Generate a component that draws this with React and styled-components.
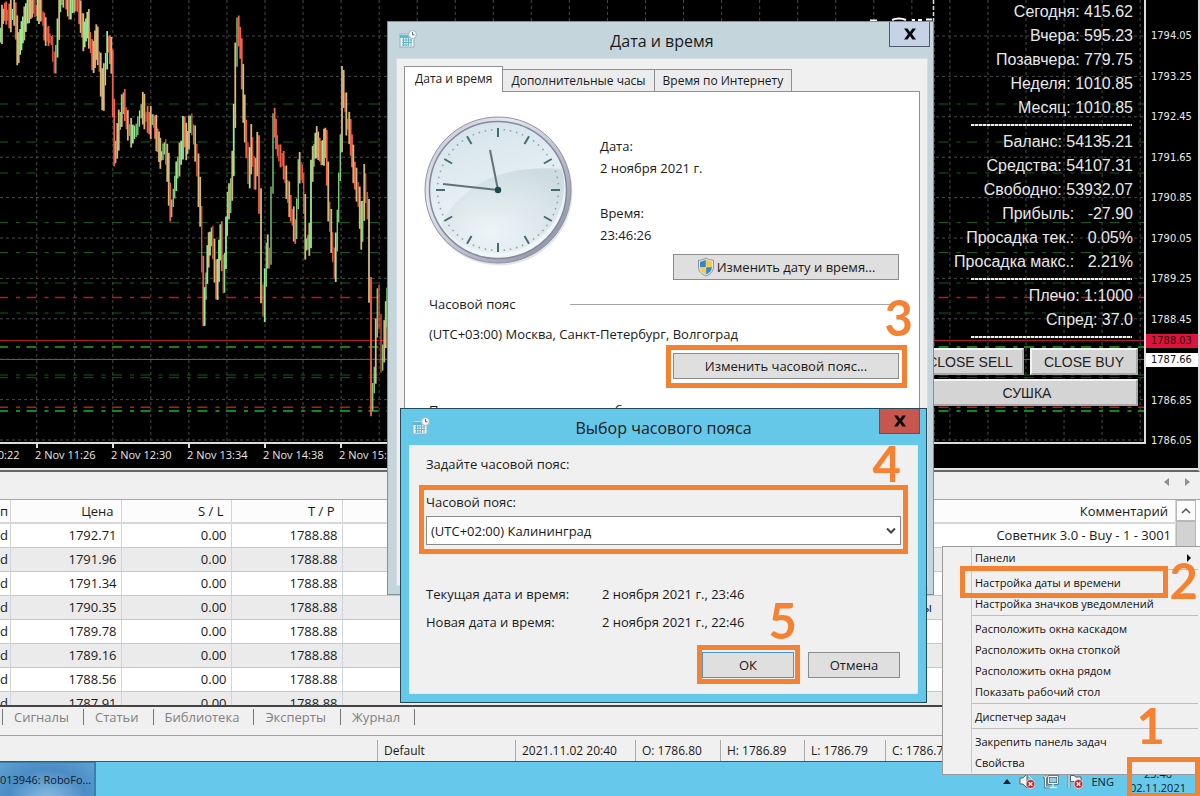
import React from "react";
import styled, { createGlobalStyle, css } from "styled-components";

const ui = '"Open Sans", "Noto Sans", sans-serif';
const arial = '"Liberation Sans", Arial, sans-serif';
const orange = "#f58233";

const GlobalStyle = createGlobalStyle`
  * {
    box-sizing: border-box;
  }
  body {
    margin: 0;
    background: #66c8ea;
    color: #1a1a1a;
    font-family: ${ui};
    font-size: 13px;
  }
  button,
  select {
    font: inherit;
    color: inherit;
  }
`;

const Desktop = styled.div`
  position: relative;
  display: flex;
  flex-direction: column;
  height: 100vh;
  min-height: 780px;
  overflow: hidden;
`;

/* ---------- chart ---------- */

const ChartSection = styled.section`
  position: relative;
  display: flex;
  flex: 0 0 472px;
  background: #000;
  color: #e8e8e8;
  border-bottom: 2px solid #666;
  border-right: 2px solid #ddd;
  box-shadow: inset 0 -2px 0 #e4e4e4;
`;

const Plot = styled.div`
  position: relative;
  display: flex;
  flex-direction: column;
  flex: 1;
  min-width: 0;
`;

const PlotArea = styled.div`
  position: relative;
  flex: 0 0 444px;
  border-right: 2px solid #ddd;
  border-bottom: 2px solid #ddd;
`;

const ChartSvg = styled.svg`
  position: absolute;
  inset: 0;
  width: 100%;
  height: 100%;
`;

const TimeAxis = styled.div`
  display: flex;
  margin-left: -41px;
  overflow: hidden;
  font-size: 11px;
  line-height: 22px;
  white-space: nowrap;
`;

const TimeLabel = styled.span`
  flex: 0 0 76px;
  background: linear-gradient(#ddd, #ddd) 1px 0 / 2px 4px no-repeat;
`;

const PriceAxis = styled.div`
  position: relative;
  display: flex;
  flex-direction: column;
  justify-content: space-between;
  flex: 0 0 52px;
  padding: 29px 0 22px;
  font-family: "DejaVu Sans Condensed", "DejaVu Sans", sans-serif;
  font-size: 11px;
  line-height: 14px;
`;

const Price = styled.span`
  padding-left: 5px;
  ${({ current }) =>
    current &&
    css`
      background: #fff;
      color: #111;
    `}
  ${({ ask }) =>
    ask &&
    css`
      position: absolute;
      top: 334px;
      left: 0;
      right: 0;
      background: #dc143c;
      color: #2a0008;
    `}
`;

const Account = styled.div`
  position: relative;
  width: 222px;
  margin-left: auto;
  margin-right: 6px;
  font-family: ${arial};
  font-size: 16px;
  line-height: 24px;
  text-align: right;
  white-space: pre;
`;

const Stat = styled.div`
  padding-right: 5px;
`;

const Rule = styled.div`
  height: 10px;
  width: 161px;
  margin-left: 55px;
  background: repeating-linear-gradient(
      90deg,
      #eee 0 3px,
      #666 3px 4px
    )
    0 50% / 100% 2px no-repeat;
`;

const TradeButtons = styled.div`
  display: grid;
  grid-template-columns: 1fr 1fr;
  gap: 4px 6px;
  padding-top: 6px;
`;

const TradeButton = styled.button`
  grid-column: ${({ wide }) => (wide ? "1 / -1" : "auto")};
  height: 27px;
  padding: 0;
  border: 2px solid;
  border-color: #f4f4f4 #a8a8a8 #a8a8a8 #f4f4f4;
  background: #d4d4d4;
  color: #222;
  font-size: 14px;
`;

/* ---------- terminal ---------- */

const ScrollStrip = styled.div`
  display: flex;
  justify-content: flex-end;
  align-items: center;
  gap: 16px;
  flex: 0 0 28px;
  padding: 0 10px 8px;
  background: #f0f0f0;
  border-bottom: 1px solid #a6a6a6;
`;

const TradeList = styled.div`
  display: flex;
  flex: 1 1 0;
  min-height: 0;
  overflow: hidden;
  background: #fff;
`;

const Table = styled.table`
  flex: 1;
  width: 0;
  table-layout: fixed;
  border-collapse: collapse;
  align-self: flex-start;
`;

const Col = styled.col`
  width: ${({ size }) => size}px;
`;

const Th = styled.th`
  height: 23px;
  padding: 0 7px 0 0;
  border-right: 1px solid #d4d4d4;
  border-bottom: 2px solid #d8d8d8;
  background: #fcfcfc;
  font-weight: 400;
  text-align: right;
  white-space: nowrap;
`;

const Tr = styled.tr`
  background: ${({ odd }) => (odd ? "#ebebeb" : "#fff")};
`;

const Td = styled.td`
  height: 24px;
  padding: 0 4px 1px 0;
  border-right: ${({ open }) => (open ? 0 : "1px solid #ccd6dc")};
  border-bottom: 1px solid #c8c8c8;
  text-align: right;
  white-space: nowrap;
`;

const ScrollBar = styled.div`
  display: flex;
  flex-direction: column;
  flex: 0 0 20px;
  margin-right: 4px;
  background: #f0f0f0;
`;

const ScrollUp = styled.button`
  display: grid;
  place-items: center;
  height: 21px;
  padding: 0;
  border: 1px solid #b8b8b8;
  background: #fbfbfb;
`;

const ScrollThumb = styled.div`
  height: 120px;
  background: #d2d2d2;
  border: 1px solid #b8b8b8;
`;

const TabStrip = styled.nav`
  display: flex;
  align-items: flex-start;
  flex: 0 0 30px;
  padding-top: 2px;
  padding-left: 2px;
  background: #f0f0f0;
  border-top: 2px solid #444;
  line-height: 16px;
`;

const TabLink = styled.a`
  padding: 0 14px 0 11px;
  border-left: 1px solid #777;
  color: #808080;
  text-decoration: none;

  &:last-child {
    border-right: 1px solid #777;
  }
`;

const StatusBar = styled.footer`
  display: flex;
  flex: 0 0 27px;
  padding: 4px 0 0 377px;
  background: #f0f0f0;
  border-top: 1px solid #a0a0a0;
  border-bottom: 1px solid #39586a;
  font-size: 12px;
  line-height: 21px;
`;

const StatusCell = styled.span`
  flex: 0 0 ${({ size }) => size}px;
  padding-left: 6px;
  border-left: 1px solid #aaa;
  white-space: nowrap;
`;

/* ---------- taskbar ---------- */

const TaskBar = styled.div`
  display: flex;
  justify-content: space-between;
  flex: 0 0 34px;
  background: #66c8ea;
`;

const TaskButton = styled.button`
  padding: 0 3px 0 0;
  border: 0;
  border-right: 2px solid #3d7fab;
  border-top: 1px solid #3d7fab;
  background: radial-gradient(
    ellipse at 50% 120%,
    #8fc0e8 0,
    #4b8cc4 60%,
    #5fa2d2 100%
  );
  color: #0b1c33;
  font-size: 11px;
  white-space: nowrap;
`;

const Tray = styled.div`
  display: flex;
  align-items: center;
  gap: 8px;
  padding-right: 14px;
  padding-top: 4px;
  color: #10222c;
  font-size: 11px;
`;

const TrayClock = styled.time`
  padding-left: 8px;
  line-height: 14px;
  text-align: center;
  white-space: pre-line;
`;

const Menu = styled.ul`
  position: absolute;
  right: 0;
  bottom: 21px;
  z-index: 5;
  width: 258px;
  margin: 0;
  padding: 0 2px 1px 28px;
  list-style: none;
  background: #f0f0f0;
  border: 1px solid #9a9a9a;
  border-right: 0;
  font-size: 11px;
  color: #111;
`;

const MenuItem = styled.li`
  position: relative;
  border-left: 1px solid #c8c8c8;
  ${({ last }) =>
    last &&
    css`
      padding-bottom: 4px;
      &::after {
        content: "";
        position: absolute;
        left: 0;
        right: 0;
        bottom: 2px;
        border-top: 1px solid #bdbdbd;
      }
    `}
`;

const MenuButton = styled.button`
  display: flex;
  justify-content: space-between;
  align-items: center;
  width: 100%;
  height: 21px;
  padding: 0 7px 0 3px;
  border: 0;
  background: none;
  text-align: left;
`;

/* ---------- numbered marks ---------- */

const Marked = styled.div`
  position: relative;
`;

const Frame = styled.div`
  position: absolute;
  inset: ${({ inset }) => inset};
  z-index: 2;
  border: 5px solid ${orange};
  pointer-events: none;
`;

const Step = styled.b`
  position: absolute;
  top: ${({ top }) => top}px;
  right: ${({ right }) => right}px;
  z-index: 6;
  color: ${orange};
  font: 700 49px/36px Lato, sans-serif;
  pointer-events: none;
`;

const ClockMark = styled.div`
  position: absolute;
  right: 0;
  bottom: 0;
  z-index: 6;
  width: 73px;
  height: 39px;
  border: 5px solid ${orange};
  border-bottom-width: 3px;
  pointer-events: none;
`;

/* ---------- dialogs ---------- */

const Dialog = styled.section`
  position: absolute;
  top: ${({ active }) => (active ? 408 : 21)}px;
  left: ${({ active }) => (active ? 400 : 387)}px;
  z-index: ${({ active }) => (active ? 4 : 3)};
  display: flex;
  flex-direction: column;
  width: ${({ active }) => (active ? 527 : 547)}px;
  min-height: ${({ active }) => (active ? 295 : 574)}px;
  padding: 0 ${({ active }) => (active ? 8 : 5)}px 8px 8px;
  border: 1px solid ${({ active }) => (active ? "#1f4a5c" : "#7f9299")};
  background: ${({ active }) => (active ? "#66c8e9" : "#c4d6dc")};
`;

const TitleBar = styled.header`
  display: grid;
  grid-template-columns: 1fr auto 1fr;
  height: 36px;
`;

const Title = styled.h2`
  margin: 0;
  font-size: 16px;
  font-weight: 400;
  line-height: 38px;
`;

const TitleIcon = styled.svg`
  margin: 8px 0 0 3px;
`;

const Close = styled.button`
  justify-self: end;
  display: grid;
  place-items: center;
  width: 41px;
  height: 25px;
  margin-right: -2px;
  padding: 0;
  border: 1px solid #4d5a68;
  border-top: 0;
  background: ${({ danger }) => (danger ? "#c7564f" : "#c6d3e6")};
`;

const DialogBody = styled.div`
  flex: 1;
  padding: ${({ tabs }) => (tabs ? "7px 7px 8px" : "9px 16px 0")};
  background: #f0f0f0;
  border: 1px solid ${({ tabs }) => (tabs ? "#d3dfe4" : "#d9edf4")};
`;

const Tabs = styled.div`
  display: flex;
  align-items: flex-end;
  height: 25px;
`;

const Tab = styled.button`
  position: relative;
  height: ${({ selected }) => (selected ? 26 : 22)}px;
  margin-bottom: ${({ selected }) => (selected ? -1 : 0)}px;
  padding: ${({ selected }) => (selected ? "0 10px 2px" : "0 8px")};
  border: 1px solid #8f8f98;
  border-bottom: 0;
  border-left-width: ${({ joined }) => (joined ? 0 : 1)}px;
  background: ${({ selected }) => (selected ? "#fff" : "#ececec")};
  font-size: 12px;
  white-space: nowrap;
  z-index: ${({ selected }) => (selected ? 1 : 0)};
`;

const TabPanel = styled.div`
  height: 470px;
  padding: 23px 20px 0 19px;
  background: #fff;
  border: 1px solid #8f8f98;
`;

const DateRow = styled.div`
  display: flex;
  gap: 26px;
`;

const DateInfo = styled.dl`
  margin: 20px 0 0;
  line-height: 22px;

  dd {
    margin: 0 0 23px;
  }
`;

const PushButton = styled.button`
  display: flex;
  justify-content: center;
  align-items: center;
  gap: 2px;
  width: ${({ small }) => (small ? "92px" : "226px")};
  height: 26px;
  padding: 0;
  border: 1px solid ${({ primary }) => (primary ? "#4d94c8" : "#8c8c8c")};
  background: #dfdfdf;
`;

const PanelButton = styled(Marked)`
  width: 226px;
  margin-left: auto;
`;

const DateAction = styled(PanelButton)`
  margin-top: -15px;
`;

const GroupTitle = styled.h3`
  display: flex;
  align-items: center;
  gap: 54px;
  margin: 13px 9px 8px 5px;
  font-size: 13px;
  font-weight: 400;
  line-height: 22px;

  &::after {
    content: "";
    flex: 1;
    border-top: 1px solid #a5a5a5;
  }
`;

const Text = styled.p`
  margin: 0 0 8px 5px;
  line-height: 22px;
`;

const DstText = styled(Text)`
  margin-top: 20px;
`;

const DialogText = styled.p`
  margin: 0 0 18px;
  line-height: 18px;
`;

const Field = styled(Marked)`
  display: flex;
  flex-direction: column;
  gap: 3px;

  label {
    line-height: 22px;
  }
`;

const SelectWrap = styled.div`
  position: relative;

  svg {
    position: absolute;
    right: 5px;
    top: 11px;
    pointer-events: none;
  }
`;

const Select = styled.select`
  width: 100%;
  height: 29px;
  padding: 0 4px;
  border: 1px solid #8a8a8a;
  border-radius: 0;
  background: #fff;
  appearance: none;
`;

const Times = styled.dl`
  display: grid;
  grid-template-columns: 176px 1fr;
  row-gap: 6px;
  margin: 38px 0 19px;
  line-height: 22px;

  dd {
    margin: 0;
  }
`;

const Actions = styled.div`
  display: flex;
  justify-content: flex-end;
  gap: 14px;
  padding-right: 1px;
`;

const times = ["10:22", "11:26", "12:30", "13:34", "14:38", "15:42"];

const prices = [
  "1794.05",
  "1793.25",
  "1792.45",
  "1791.65",
  "1790.85",
  "1790.05",
  "1789.25",
  "1788.45",
  "1787.66",
  "1786.85",
  "1786.05",
];

const stats = [
  "Сегодня: 415.62",
  "Вчера: 595.23",
  "Позавчера: 779.75",
  "Неделя: 1010.85",
  "Месяц: 1010.85",
  null,
  "Баланс: 54135.21",
  "Средства: 54107.31",
  "Свободно: 53932.07",
  "Прибыль:   -27.90",
  "Просадка тек.:   0.05%",
  "Просадка макс.:   2.21%",
  null,
  "Плечо: 1:1000",
  "Спред: 37.0",
  null,
];

const orders = [
  "1792.71",
  "1791.96",
  "1791.34",
  "1790.35",
  "1789.78",
  "1789.16",
  "1788.56",
  "1787.91",
];

const menu = [
  { label: "Панели", sub: true, last: true },
  { label: "Настройка даты и времени", marked: true },
  { label: "Настройка значков уведомлений", last: true },
  { label: "Расположить окна каскадом" },
  { label: "Расположить окна стопкой" },
  { label: "Расположить окна рядом" },
  { label: "Показать рабочий стол", last: true },
  { label: "Диспетчер задач", last: true },
  { label: "Закрепить панель задач" },
  { label: "Свойства" },
];

// x, y turning points of the price
const turns = [
  [0, 40], [4, 12], [10, 18], [15, 12], [18, 52], [25, 22], [30, 3], [37, 12],
  [41, 6], [45, 32], [52, 42], [55, 70], [60, 8], [64, -10], [70, 10], [75, -4],
  [80, 14], [84, 38], [88, 24], [93, 62], [97, 40], [103, 98], [108, 42],
  [112, 60], [115, 158], [121, 116], [124, 100], [127, 125], [132, 136],
  [137, 130], [142, 108], [150, 126], [153, 118], [157, 138], [161, 158],
  [165, 147], [168, 170], [171, 214], [177, 172], [182, 150], [184, 128],
  [187, 148], [191, 120], [196, 150], [201, 214], [204, 318], [208, 255],
  [212, 234], [217, 290], [221, 234], [224, 288], [228, 200], [230, 206],
  [233, 168], [236, 60], [238, 26], [241, 50], [244, 110], [247, 150],
  [249, 178], [252, 142], [255, 184], [258, 146], [260, 205], [262, 290],
  [264, 312], [267, 250], [270, 262], [272, 190], [274, 118], [278, 152],
  [283, 162], [287, 188], [293, 222], [296, 236], [299, 168], [303, 176],
  [306, 246], [310, 240], [312, 170], [316, 142], [322, 156], [326, 142],
  [329, 210], [332, 240], [335, 272], [338, 218], [341, 138], [343, 84],
  [347, 122], [350, 132], [354, 172], [359, 200], [362, 236], [365, 180],
  [368, 215], [370, 290], [372, 406], [375, 372], [378, 294], [380, 322],
  [382, 366], [385, 335], [388, 300],
];

const bars = [];
turns.slice(1).forEach(([x2, y2], i) => {
  const [x1, y1] = turns[i];
  const n = Math.max(1, Math.round((x2 - x1) / 1.5));
  for (let k = 0; k < n; k += 1) {
    const a = y1 + ((y2 - y1) * k) / n;
    const b = y1 + ((y2 - y1) * (k + 1)) / n;
    const seed = Math.abs(Math.sin((i * 5 + k) * 12.9898) * 43758.5) % 1;
    const wick = 3 + seed * 15;
    let color = y2 < y1 ? "#90ee90" : "#f4604a";
    if (seed > 0.68) color = "#d8b878";
    bars.push({
      x: x1 + ((x2 - x1) * (k + 0.5)) / n,
      top: Math.min(a, b) - wick,
      bottom: Math.max(a, b) + wick * 0.8,
      color,
      width: seed > 0.4 ? 1.8 : 1.2,
    });
  }
});

const levels = [
  [104, "#135c17", 1],
  [142, "#135c17", 1],
  [173, "#135c17", 1],
  [222.5, "#135c17", 1],
  [252.5, "#135c17", 1],
  [283, "#135c17", 1],
  [297.5, "#c4141c", 1.4],
  [313, "#135c17", 1],
  [347, "#128012", 1.8],
  [375, "#135c17", 1],
  [377.7, "#135c17", 1],
  [407.2, "#b41c1c", 1.6],
  [411, "#0f8a14", 1.8],
];

const range = (n) => Array.from({ length: n }, (_, i) => i);

const Chart = () => (
  <ChartSvg aria-hidden="true">
    {range(30).map((i) => (
      <line
        key={i}
        x1={36.7 + i * 38.05}
        x2={36.7 + i * 38.05}
        y1="0"
        y2="442"
        stroke="#4a4a4a"
        strokeDasharray="3 3"
      />
    ))}
    {range(11).map((i) => (
      <line
        key={i}
        x1="0"
        x2="100%"
        y1={36 + i * 40.4}
        y2={36 + i * 40.4}
        stroke="#4a4a4a"
        strokeDasharray="3 3"
      />
    ))}
    {levels.map(([y, color, width]) => (
      <line
        key={y}
        x1="-2"
        x2="100%"
        y1={y}
        y2={y}
        stroke={color}
        strokeWidth={width}
        strokeDasharray="10 8 4 6.5"
      />
    ))}
    <line x1="0" x2="100%" y1="340.5" y2="340.5" stroke="#b01c30" />
    <line x1="0" x2="100%" y1="359.5" y2="359.5" stroke="#5a5a5a" />
    {bars.map((bar) => (
      <line
        key={bar.x}
        x1={bar.x}
        x2={bar.x}
        y1={bar.top}
        y2={bar.bottom}
        stroke={bar.color}
        strokeWidth={bar.width}
      />
    ))}
    <line
      x1="933.5"
      x2="933.5"
      y1="0"
      y2="442"
      stroke="#ddd"
      strokeWidth="1.5"
      strokeDasharray="4 2"
    />
    <path
      d="M870 20.5h7M892 20q7-3 14 0M912 20h3M918 20h4M926 19.5h6"
      stroke="#fff"
      strokeWidth="2"
      fill="none"
    />
  </ChartSvg>
);

const DateIcon = () => (
  <TitleIcon width="18" height="18" viewBox="0 0 18 18" aria-hidden="true">
    <rect x="1" y="4" width="14" height="13" fill="#eef7fa" stroke="#8fb2bf" />
    <path d="M1 5h14v3H1z" fill="#58bcd6" />
    <path
      d="M3 10h10M3 12.5h10M3 15h7M4.5 8v8M7 8v8M9.500 8v8M12 8v8"
      stroke="#62b6cc"
      strokeWidth="1"
    />
    <circle cx="13.500" cy="4.500" r="4" fill="#f5f8fa" stroke="#a4b3ba" />
    <path d="M13.500 2v2.800h2" stroke="#54707c" fill="none" />
  </TitleIcon>
);

const Cross = () => (
  <svg width="14" height="12" viewBox="0 0 14 12" aria-hidden="true">
    <path
      d="M1 0.500h3.600L7 4l2.400-3.500H13L9 6l4 5.500H9.400L7 8l-2.400 3.500H1L5 6z"
      fill="#0b0b0b"
    />
  </svg>
);

const Clock = () => (
  <svg width="150" height="152" viewBox="0 0 150 152" aria-hidden="true">
    <defs>
      <linearGradient id="rim" x1="0" y1="0" x2="1" y2="1">
        <stop offset="0" stopColor="#b9bdc9" />
        <stop offset="0.3" stopColor="#e6e8f0" />
        <stop offset="1" stopColor="#82869a" />
      </linearGradient>
      <linearGradient id="face" x1="0" y1="0" x2="0.3" y2="1">
        <stop offset="0" stopColor="#d3e2ea" />
        <stop offset="1" stopColor="#f1f7f9" />
      </linearGradient>
      <radialGradient id="shade" cx="0.4" cy="0.75" r="0.8">
        <stop offset="0" stopColor="#edf4f6" />
        <stop offset="1" stopColor="#c8d8dd" />
      </radialGradient>
    </defs>
    <circle cx="75" cy="77" r="73.500" fill="#e4e5ea" />
    <circle cx="74" cy="75" r="73" fill="url(#rim)" stroke="#8f93a2" />
    <circle cx="74" cy="75" r="68.500" fill="url(#face)" stroke="#84899b" strokeWidth="1.500" />
    <path
      d="M17 109 Q28 86 56 68 Q90 50 138 54 A67.500 67.500 0 0 1 17 109z"
      fill="url(#shade)"
      opacity="0.8"
    />
    {range(60).map((i) =>
      i % 5 === 0 ? (
        <path
          key={i}
          d="M74 13v9"
          stroke="#466b70"
          strokeWidth="2"
          transform={`rotate(${i * 6} 74 75)`}
        />
      ) : (
        <circle
          key={i}
          cx="74"
          cy="14.500"
          r="0.900"
          fill="#94a4ac"
          transform={`rotate(${i * 6} 74 75)`}
        />
      )
    )}
    <path d="M74 75L66 35" stroke="#5f7378" strokeWidth="2" />
    <path d="M74 75L19 69" stroke="#5f7378" strokeWidth="2" />
    <circle cx="74" cy="75" r="3.200" fill="#164d4b" />
  </svg>
);

const Shield = () => (
  <svg width="18" height="20" viewBox="0 0 18 20" aria-hidden="true">
    <path
      d="M9 1C6.500 2.700 4 3.200 1.500 3.200V10c0 4.200 3 7.200 7.500 9 4.500-1.800 7.500-4.800 7.500-9V3.200C14 3.200 11.500 2.700 9 1z"
      fill="#e4e4e4"
      stroke="#8e9498"
    />
    <path d="M8.800 2.800C7 4 5 4.600 3 4.700V10h5.800z" fill="#3187cf" />
    <path d="M9.200 2.800C11 4 13 4.600 15 4.700V10H9.200z" fill="#f4cd38" />
    <path d="M3 10.300c.2 3.200 2.500 5.600 5.800 7.100v-7.100z" fill="#f4cd38" />
    <path d="M15 10.300c-.2 3.200-2.500 5.600-5.800 7.100v-7.100z" fill="#3187cf" />
  </svg>
);

const ErrorBadge = () => (
  <>
    <circle cx="11.500" cy="11" r="4.500" fill="#c8262c" stroke="#f0dada" />
    <path d="M9.700 9.200l3.600 3.600m0-3.600l-3.600 3.600" stroke="#fff" strokeWidth="1.400" />
  </>
);

const TrayIcons = () => (
  <>
    <svg width="8" height="5" viewBox="0 0 8 5" aria-hidden="true">
      <path d="M0 5l4-5 4 5z" fill="#10222c" />
    </svg>
    <svg width="16" height="16" viewBox="0 0 16 16" aria-hidden="true">
      <path d="M1 5h3l4-4v14l-4-4H1z" fill="#f4f4f4" stroke="#50666f" />
      <path d="M10 3q3 2 2.500 5" stroke="#f4f4f4" fill="none" />
      <ErrorBadge />
    </svg>
    <svg width="16" height="16" viewBox="0 0 16 16" aria-hidden="true">
      <path d="M5.500 3.500h9v7h-9z" fill="#8ed3ec" stroke="#50666f" strokeWidth="2.400" />
      <path d="M5.500 3.500h9v7h-9zM10 11v3M6 14.500h8" fill="none" stroke="#fff" />
      <path d="M1 1v3h3V1M2.500 4v10h4" fill="none" stroke="#50666f" strokeWidth="2.400" />
      <path d="M1 1v3h3V1M2.500 4v10h4" fill="none" stroke="#fff" />
    </svg>
    <svg width="16" height="16" viewBox="0 0 16 16" aria-hidden="true">
      <path d="M2 1v14" stroke="#50666f" strokeWidth="2.600" />
      <path d="M2 1v14" stroke="#fff" strokeWidth="1.200" />
      <path d="M3.500 2.500h4l1 1.500H14v6H8l-1-1.500H3.500z" fill="#f4f4f4" stroke="#50666f" />
      <ErrorBadge />
    </svg>
  </>
);

const App = () => (
  <>
    <GlobalStyle />
    <Desktop>
      <ChartSection>
        <Plot>
          <PlotArea>
            <Chart />
            <Account>
              {stats.map((stat, i) =>
                stat ? <Stat key={stat}>{stat}</Stat> : <Rule key={i} />
              )}
              <TradeButtons>
                <TradeButton>CLOSE SELL</TradeButton>
                <TradeButton>CLOSE BUY</TradeButton>
                <TradeButton wide>СУШКА</TradeButton>
              </TradeButtons>
            </Account>
          </PlotArea>
          <TimeAxis>
            {times.map((time) => (
              <TimeLabel key={time}>2 Nov {time}</TimeLabel>
            ))}
          </TimeAxis>
        </Plot>
        <PriceAxis>
          {prices.map((price) => (
            <Price key={price} current={price === "1787.66"}>
              {price}
            </Price>
          ))}
          <Price ask>1788.03</Price>
        </PriceAxis>
      </ChartSection>

      <ScrollStrip>
        <svg width="5" height="8" viewBox="0 0 5 8" aria-hidden="true">
          <path d="M5 0v8L0 4z" fill="#909090" />
        </svg>
        <svg width="5" height="8" viewBox="0 0 5 8" aria-hidden="true">
          <path d="M0 0v8l5-4z" fill="#909090" />
        </svg>
      </ScrollStrip>

      <TradeList>
        <Table>
          <colgroup>
            <Col size={10} />
            <Col size={111} />
            <Col size={110} />
            <Col size={111} />
            <Col size={594} />
            <col />
          </colgroup>
          <thead>
            <tr>
              <Th>п</Th>
              <Th>Цена</Th>
              <Th>S / L</Th>
              <Th>T / P</Th>
              <Th colSpan={2}>Комментарий</Th>
            </tr>
          </thead>
          <tbody>
            {orders.map((price, i) => (
              <Tr key={price} odd={i % 2 === 1}>
                <Td>d</Td>
                <Td>{price}</Td>
                <Td>0.00</Td>
                <Td>1788.88</Td>
                <Td open>{i === 3 && "ы"}</Td>
                <Td>{i === 0 && "Советник 3.0 - Buy - 1 - 3001"}</Td>
              </Tr>
            ))}
          </tbody>
        </Table>
        <ScrollBar>
          <ScrollUp aria-label="Вверх">
            <svg width="10" height="6" viewBox="0 0 10 6" aria-hidden="true">
              <path d="M1 5l4-4 4 4" fill="none" stroke="#555" strokeWidth="1.500" />
            </svg>
          </ScrollUp>
          <ScrollThumb />
        </ScrollBar>
      </TradeList>

      <TabStrip>
        {["Сигналы", "Статьи", "Библиотека", "Эксперты", "Журнал"].map((tab) => (
          <TabLink key={tab} href="#">
            {tab}
          </TabLink>
        ))}
      </TabStrip>

      <StatusBar>
        <StatusCell size={138}>Default</StatusCell>
        <StatusCell size={120}>2021.11.02 20:40</StatusCell>
        <StatusCell size={85}>O: 1786.80</StatusCell>
        <StatusCell size={84}>H: 1786.89</StatusCell>
        <StatusCell size={81}>L: 1786.79</StatusCell>
        <StatusCell size={81}>C: 1786.79</StatusCell>
      </StatusBar>

      <TaskBar>
        <TaskButton>013946: RoboFo...</TaskButton>
        <Tray>
          <TrayIcons />
          <span>ENG</span>
          <TrayClock>{"23:46\n02.11.2021"}</TrayClock>
        </Tray>
      </TaskBar>

      <Dialog>
        <TitleBar>
          <DateIcon />
          <Title>Дата и время</Title>
          <Close aria-label="Закрыть">
            <Cross />
          </Close>
        </TitleBar>
        <DialogBody tabs>
          <Tabs>
            <Tab selected>Дата и время</Tab>
            <Tab joined>Дополнительные часы</Tab>
            <Tab joined>Время по Интернету</Tab>
          </Tabs>
          <TabPanel>
            <DateRow>
              <Clock />
              <DateInfo>
                <dt>Дата:</dt>
                <dd>2 ноября 2021 г.</dd>
                <dt>Время:</dt>
                <dd>23:46:26</dd>
              </DateInfo>
            </DateRow>
            <DateAction>
              <PushButton>
                <Shield />
                Изменить дату и время...
              </PushButton>
            </DateAction>
            <GroupTitle>Часовой пояс</GroupTitle>
            <Text>(UTC+03:00) Москва, Санкт-Петербург, Волгоград</Text>
            <PanelButton>
              <PushButton>Изменить часовой пояс...</PushButton>
              <Frame inset="-8px -8px -9px -7px" />
              <Step top={-54} right={-14}>
                3
              </Step>
            </PanelButton>
            <DstText>Переход на летнее время и обратно не выполняется.</DstText>
          </TabPanel>
        </DialogBody>
      </Dialog>

      <Dialog active>
        <TitleBar>
          <DateIcon />
          <Title>Выбор часового пояса</Title>
          <Close danger aria-label="Закрыть">
            <Cross />
          </Close>
        </TitleBar>
        <DialogBody>
          <DialogText>Задайте часовой пояс:</DialogText>
          <Field>
            <label htmlFor="zone">Часовой пояс:</label>
            <SelectWrap>
              <Select id="zone">
                <option>(UTC+02:00) Калининград</option>
              </Select>
              <svg width="10" height="8" viewBox="0 0 10 8" aria-hidden="true">
                <path d="M1 1.500l4 4 4-4" fill="none" stroke="#444" strokeWidth="2" />
              </svg>
            </SelectWrap>
            <Frame inset="-6px -7px -9px" />
            <Step top={-46} right={0}>
              4
            </Step>
          </Field>
          <Times>
            <dt>Текущая дата и время:</dt>
            <dd>2 ноября 2021 г., 23:46</dd>
            <dt>Новая дата и время:</dt>
            <dd>2 ноября 2021 г., 22:46</dd>
          </Times>
          <Actions>
            <Marked>
              <PushButton small primary>
                ОК
              </PushButton>
              <Frame inset="-7px -6px -6px -5px" />
              <Step top={-50} right={-3}>
                5
              </Step>
            </Marked>
            <PushButton small>Отмена</PushButton>
          </Actions>
        </DialogBody>
      </Dialog>

      <Menu>
        {menu.map(({ label, sub, marked, last }) => (
          <MenuItem key={label} last={last}>
            <MenuButton>
              {label}
              {sub && (
                <svg width="4" height="8" viewBox="0 0 4 8" aria-hidden="true">
                  <path d="M0 0v8l4-4z" fill="#111" />
                </svg>
              )}
            </MenuButton>
            {marked && (
              <>
                <Frame inset="-6px 30px -5px -12px" />
                <Step top={-10} right={0}>
                  2
                </Step>
              </>
            )}
            {label === "Диспетчер задач" && (
              <Step top={1} right={33}>
                1
              </Step>
            )}
          </MenuItem>
        ))}
      </Menu>
      <ClockMark />
    </Desktop>
  </>
);

export default App;
